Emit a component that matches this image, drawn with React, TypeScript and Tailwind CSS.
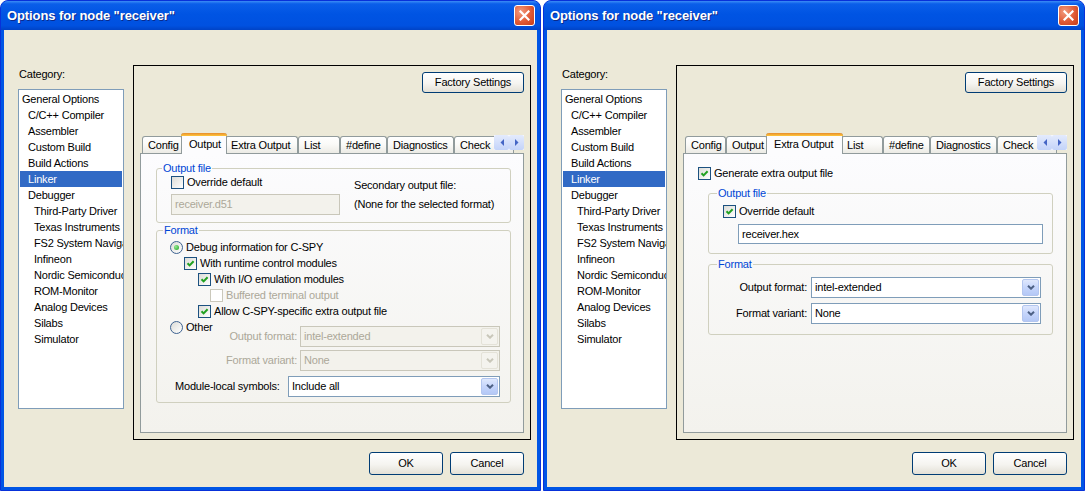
import type { ReactNode } from "react";

type Category = { label: string; level: 0 | 1 | 2 };

const CATEGORIES: Category[] = [
  { label: "General Options", level: 0 },
  { label: "C/C++ Compiler", level: 1 },
  { label: "Assembler", level: 1 },
  { label: "Custom Build", level: 1 },
  { label: "Build Actions", level: 1 },
  { label: "Linker", level: 1 },
  { label: "Debugger", level: 1 },
  { label: "Third-Party Driver", level: 2 },
  { label: "Texas Instruments", level: 2 },
  { label: "FS2 System Navigator", level: 2 },
  { label: "Infineon", level: 2 },
  { label: "Nordic Semiconductor", level: 2 },
  { label: "ROM-Monitor", level: 2 },
  { label: "Analog Devices", level: 2 },
  { label: "Silabs", level: 2 },
  { label: "Simulator", level: 2 },
];

const TABS = [
  { label: "Config", w: "w-[41px]", wActive: "w-[45px]" },
  { label: "Output", w: "w-[42px]", wActive: "w-[46px]" },
  { label: "Extra Output", w: "w-[73px]", wActive: "w-[77px]" },
  { label: "List", w: "w-[42px]", wActive: "w-[46px]" },
  { label: "#define", w: "w-[47px]", wActive: "w-[51px]" },
  { label: "Diagnostics", w: "w-[67px]", wActive: "w-[71px]" },
  { label: "Check", w: "w-[60px]", wActive: "w-[64px]" },
];

function CloseButton() {
  return (
    <span className="flex h-[21px] w-[21px] items-center justify-center rounded-[3px] border border-white bg-[radial-gradient(circle_at_30%_30%,#f29a7e,#e05a35_55%,#c43c19)]">
      <svg width="11" height="11" viewBox="0 0 11 11">
        <path d="M1.5 1.5 L9.5 9.5 M9.5 1.5 L1.5 9.5" stroke="#fff" strokeWidth="2.2" strokeLinecap="square" />
      </svg>
    </span>
  );
}

function XpWindow({ className, children }: { className: string; children: ReactNode }) {
  return (
    <div className={`flex h-[491px] shrink-0 flex-col rounded-t-[8px] border border-[#0831d9] bg-[#0055e5] ${className}`}>
      <div className="flex h-[29px] shrink-0 items-center justify-between rounded-t-[7px] bg-[linear-gradient(to_bottom,#3b8cf6_0%,#0a5ee9_10%,#0054e3_45%,#0051e0_85%,#0043c6_100%)] pl-[6px] pr-[5px]">
        <span className="pt-[1px] text-[13px] font-bold leading-[16px] tracking-[-0.1px] text-white [text-shadow:1px_1px_0_#0b2a8a]">
          Options for node "receiver"
        </span>
        <CloseButton />
      </div>
      <div className="mx-[3px] mb-[3px] flex-1 bg-[#ece9d8] pl-[14px] pt-[35px]">{children}</div>
    </div>
  );
}

function XpButton({ className, children }: { className: string; children: ReactNode }) {
  return (
    <button
      className={`flex items-center justify-center rounded-[3px] border border-[#003c74] bg-[linear-gradient(to_bottom,#ffffff,#f5f4f0_55%,#e3e0d6)] text-[11px] text-black ${className}`}
    >
      {children}
    </button>
  );
}

function Check({ checked = false, disabled = false }: { checked?: boolean; disabled?: boolean }) {
  return (
    <span
      className={`flex h-[13px] w-[13px] shrink-0 items-center justify-center border ${
        disabled
          ? "border-[#cac8bb] bg-white"
          : "border-[#1c5180] bg-[linear-gradient(135deg,#dcdcd7,#ffffff)]"
      }`}
    >
      {checked ? (
        <svg width="9" height="9" viewBox="0 0 9 9">
          <path d="M1.5 4.2 L3.6 6.4 L7.6 2.2" stroke="#21a121" strokeWidth="2" fill="none" />
        </svg>
      ) : null}
    </span>
  );
}

function Radio({ checked = false }: { checked?: boolean }) {
  return (
    <span className="flex h-[13px] w-[13px] shrink-0 items-center justify-center rounded-full border border-[#3d6290] bg-[linear-gradient(135deg,#dcdcd7,#ffffff)]">
      {checked ? (
        <span className="h-[5px] w-[5px] rounded-full bg-[radial-gradient(circle_at_35%_35%,#93e993,#21a121)]" />
      ) : null}
    </span>
  );
}

function CheckRow({
  label,
  className,
  checked,
  disabled,
}: {
  label: string;
  className: string;
  checked?: boolean;
  disabled?: boolean;
}) {
  return (
    <div className={`flex items-center gap-[3px] whitespace-nowrap ${className}`}>
      <Check checked={checked} disabled={disabled} />
      <span className={disabled ? "text-[#aca899]" : ""}>{label}</span>
    </div>
  );
}

function RadioRow({ label, className, checked }: { label: string; className: string; checked?: boolean }) {
  return (
    <div className={`flex items-center gap-[3px] whitespace-nowrap ${className}`}>
      <Radio checked={checked} />
      <span>{label}</span>
    </div>
  );
}

function DropButton({ disabled }: { disabled?: boolean }) {
  return (
    <span
      className={`mr-[1px] flex h-[17px] w-[17px] shrink-0 items-center justify-center rounded-[2px] border ${
        disabled
          ? "border-[#e4e2d8] bg-[#f4f3ee]"
          : "border-[#b3c6ef] bg-[linear-gradient(to_bottom,#dfe8fd,#c5d5fb_50%,#b4c8f6)]"
      }`}
    >
      <svg width="8" height="5" viewBox="0 0 8 5">
        <path d="M1 0.7 L4 3.7 L7 0.7" fill="none" stroke={disabled ? "#c9c7ba" : "#4d6185"} strokeWidth="2" />
      </svg>
    </span>
  );
}

function Combo({ value, className, disabled }: { value: string; className: string; disabled?: boolean }) {
  return (
    <div
      className={`flex h-[21px] items-center border ${
        disabled ? "border-[#c9c7ba] bg-[#f3f2ec] text-[#aca899]" : "border-[#7f9db9] bg-white text-black"
      } ${className}`}
    >
      <span className="flex-1 truncate pl-[3px]">{value}</span>
      <DropButton disabled={disabled} />
    </div>
  );
}

function LabeledCombo({
  label,
  value,
  comboW,
  gap,
  disabled,
}: {
  label: string;
  value: string;
  comboW: string;
  gap: string;
  disabled?: boolean;
}) {
  return (
    <div className={`flex items-center ${gap}`}>
      <span className={`whitespace-nowrap ${disabled ? "text-[#aca899]" : ""}`}>{label}</span>
      <Combo value={value} className={comboW} disabled={disabled} />
    </div>
  );
}

function Group({
  label,
  className,
  legendMl,
  children,
}: {
  label: string;
  className: string;
  legendMl: string;
  children: ReactNode;
}) {
  return (
    <fieldset className={`rounded-[3px] border border-[#d0d0bf] ${className}`}>
      <legend className={`px-[1px] leading-[13px] text-[#0046d5] ${legendMl}`}>{label}</legend>
      {children}
    </fieldset>
  );
}

function CategoryList() {
  return (
    <div className="mt-[6px] h-[320px] overflow-hidden border border-[#7f9db9] bg-white p-[1px]">
      {CATEGORIES.map((c) => (
        <div
          key={c.label}
          className={`h-[16px] whitespace-nowrap leading-[16px] ${
            c.level === 0 ? "pl-[2px]" : c.level === 1 ? "pl-[8px]" : "pl-[14px]"
          } ${c.label === "Linker" ? "bg-[#316ac5] text-white" : ""}`}
        >
          {c.label}
        </div>
      ))}
    </div>
  );
}

function TabStrip({ active }: { active: string }) {
  return (
    <div className="relative mt-[40px] flex h-[20px] items-end pl-[2px]">
      {TABS.map((t) =>
        t.label === active ? (
          <div
            key={t.label}
            className={`relative z-10 -mx-[2px] -mb-px flex h-[21px] flex-col rounded-t-[3px] border-x border-[#919b9c] bg-[#fcfcfe] ${t.wActive}`}
          >
            <span className="-mx-px h-[3px] rounded-t-[3px] bg-[linear-gradient(to_bottom,#e68b2c,#ffc73c)]" />
            <span className="flex flex-1 items-center whitespace-nowrap pb-[2px] pl-[7px]">{t.label}</span>
          </div>
        ) : (
          <div
            key={t.label}
            className={`flex h-[17px] items-center whitespace-nowrap rounded-t-[3px] border border-b-0 border-[#919b9c] bg-[linear-gradient(to_bottom,#ffffff,#fafaf8_45%,#ecebe5)] pl-[5px] ${t.w}`}
          >
            {t.label}
          </div>
        ),
      )}
      <div className="absolute right-0 top-[2px] z-20 flex h-[15px] w-[30px] bg-[#fcfcfe]">
        <span className="flex flex-1 items-center justify-center rounded-[2px] bg-[linear-gradient(to_bottom,#e4ebfd,#c3d3f9)]">
          <svg width="4" height="7" viewBox="0 0 4 7">
            <path d="M4 0 L0.5 3.5 L4 7 Z" fill="#4465c5" />
          </svg>
        </span>
        <span className="flex flex-1 items-center justify-center rounded-[2px] bg-[linear-gradient(to_bottom,#e4ebfd,#c3d3f9)]">
          <svg width="4" height="7" viewBox="0 0 4 7">
            <path d="M0 0 L3.5 3.5 L0 7 Z" fill="#4465c5" />
          </svg>
        </span>
      </div>
    </div>
  );
}

function OptionsBody({ activeTab, children }: { activeTab: string; children: ReactNode }) {
  return (
    <div className="flex w-[513px] flex-col">
      <div className="flex items-start gap-[9px]">
        <div className="flex w-[106px] flex-col">
          <div className="h-[18px] pl-[1px] leading-[18px]">Category:</div>
          <CategoryList />
        </div>
        <div className="flex h-[375px] w-[398px] flex-col border border-black p-[6px]">
          <XpButton className="h-[21px] w-[102px] self-end">Factory Settings</XpButton>
          <TabStrip active={activeTab} />
          <div className="h-[280px] border border-[#919b9c] bg-[linear-gradient(to_bottom,#fcfcfe,#f3f2ed)]">
            {children}
          </div>
        </div>
      </div>
      <div className="mt-[12px] flex justify-end gap-[7px] pr-[7px]">
        <XpButton className="h-[23px] w-[74px]">OK</XpButton>
        <XpButton className="h-[23px] w-[74px]">Cancel</XpButton>
      </div>
    </div>
  );
}

function OutputPage() {
  return (
    <div className="flex flex-col pl-[15px] pt-[8px]">
      <Group label="Output file" legendMl="ml-[5px]" className="w-[355px] pb-[7px]">
        <div className="flex">
          <div className="flex flex-col pl-[14px] pt-[1px]">
            <CheckRow className="h-[13px]" label="Override default" />
            <div className="mt-[5px] flex h-[21px] w-[169px] items-center border border-[#c9c7ba] bg-[#f3f2ec] pl-[3px] text-[#aca899]">
              receiver.d51
            </div>
          </div>
          <div className="ml-[14px] flex flex-col gap-[6px] whitespace-nowrap pt-[4px]">
            <span>Secondary output file:</span>
            <span>(None for the selected format)</span>
          </div>
        </div>
      </Group>
      <Group label="Format" legendMl="ml-[6px]" className="mt-[1px] w-[355px] pb-[5px] pr-[10px]">
        <div className="flex flex-col pt-[2px]">
          <RadioRow className="h-[16px] pl-[13px]" checked label="Debug information for C-SPY" />
          <CheckRow className="h-[16px] pl-[27px]" checked label="With runtime control modules" />
          <CheckRow className="h-[16px] pl-[41px]" checked label="With I/O emulation modules" />
          <CheckRow className="h-[16px] pl-[53px]" disabled label="Buffered terminal output" />
          <CheckRow className="h-[16px] pl-[41px]" checked label="Allow C-SPY-specific extra output file" />
          <div className="flex items-start pl-[13px]">
            <RadioRow className="h-[16px]" label="Other" />
            <div className="ml-auto flex flex-col items-end gap-[3px] pt-[7px]">
              <LabeledCombo label="Output format:" value="intel-extended" comboW="w-[200px]" gap="gap-[3px]" disabled />
              <LabeledCombo label="Format variant:" value="None" comboW="w-[200px]" gap="gap-[3px]" disabled />
            </div>
          </div>
          <div className="mt-[5px] flex items-center pl-[18px]">
            <span>Module-local symbols:</span>
            <Combo className="ml-auto w-[212px]" value="Include all" />
          </div>
        </div>
      </Group>
    </div>
  );
}

function ExtraOutputPage() {
  return (
    <div className="flex flex-col pt-[13px]">
      <CheckRow className="h-[13px] pl-[14px]" checked label="Generate extra output file" />
      <Group label="Output file" legendMl="ml-[8px]" className="ml-[24px] mt-[7px] w-[345px] pb-[9px]">
        <CheckRow className="mt-[5px] h-[13px] pl-[14px]" checked label="Override default" />
        <div className="ml-[29px] mt-[6px] flex h-[20px] w-[305px] items-center border border-[#7f9db9] bg-white pl-[3px]">
          receiver.hex
        </div>
      </Group>
      <Group label="Format" legendMl="ml-[8px]" className="ml-[24px] mt-[4px] w-[345px] pb-[10px] pr-[11px]">
        <div className="flex flex-col items-end gap-[5px] pt-[6px]">
          <LabeledCombo label="Output format:" value="intel-extended" comboW="w-[230px]" gap="gap-[4px]" />
          <LabeledCombo label="Format variant:" value="None" comboW="w-[230px]" gap="gap-[4px]" />
        </div>
      </Group>
    </div>
  );
}

export default function App() {
  return (
    <div className="flex h-[491px] w-[1085px] gap-[2px] overflow-hidden bg-white font-['Liberation_Sans',Arial,sans-serif] text-[11px] leading-[13px] tracking-[-0.2px] text-black">
      <XpWindow className="w-[541px]">
        <OptionsBody activeTab="Output">
          <OutputPage />
        </OptionsBody>
      </XpWindow>
      <XpWindow className="w-[542px]">
        <OptionsBody activeTab="Extra Output">
          <ExtraOutputPage />
        </OptionsBody>
      </XpWindow>
    </div>
  );
}
